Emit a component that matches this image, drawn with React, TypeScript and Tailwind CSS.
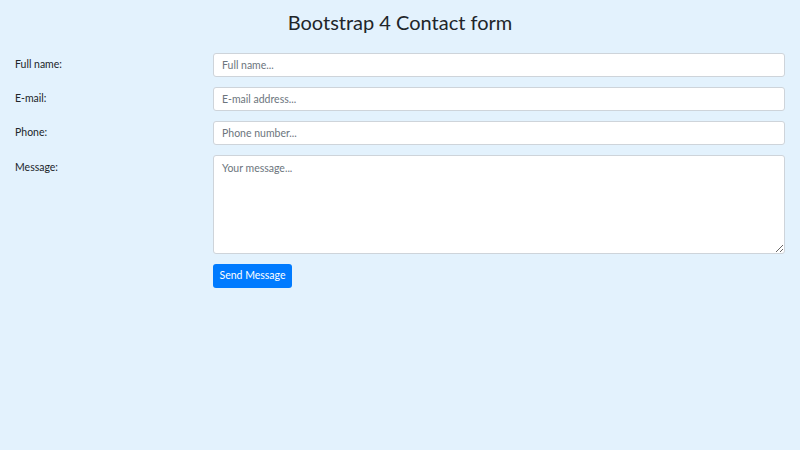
export default function App() {
  const fields = [
    { label: 'Full name:', placeholder: 'Full name...' },
    { label: 'E-mail:', placeholder: 'E-mail address...' },
    { label: 'Phone:', placeholder: 'Phone number...' },
  ]

  return (
    <div className="min-h-[450px] w-full bg-[#e3f2fd] font-['Lato',sans-serif] text-[#212529]">
      <div className="px-[15px] pt-[9px]">
        <h1 className="text-center text-[20px] leading-[26px] font-normal">Bootstrap 4 Contact form</h1>
        <form className="mt-[18px] flex flex-col gap-[10px]" onSubmit={(e) => e.preventDefault()}>
          {fields.map((f) => (
            <div key={f.label} className="flex items-center">
              <label className="w-[198px] shrink-0 text-[10.5px]">{f.label}</label>
              <input
                type="text"
                placeholder={f.placeholder}
                className="h-[24px] flex-1 rounded-[3px] border border-[#ced4da] bg-white px-[8px] text-[10.5px] outline-none placeholder:text-[#6c757d]"
              />
            </div>
          ))}
          <div className="flex items-start">
            <label className="w-[198px] shrink-0 pt-[5px] text-[10.5px]">Message:</label>
            <textarea
              placeholder="Your message..."
              className="h-[99px] flex-1 rounded-[3px] border border-[#ced4da] bg-white px-[8px] py-[5px] text-[10.5px] outline-none placeholder:text-[#6c757d]"
            />
          </div>
          <div className="flex">
            <div className="w-[198px] shrink-0" />
            <button
              type="submit"
              className="h-[24px] w-[79px] rounded-[3px] bg-[#007bff] text-[10.5px] text-white"
            >
              Send Message
            </button>
          </div>
        </form>
      </div>
    </div>
  )
}
